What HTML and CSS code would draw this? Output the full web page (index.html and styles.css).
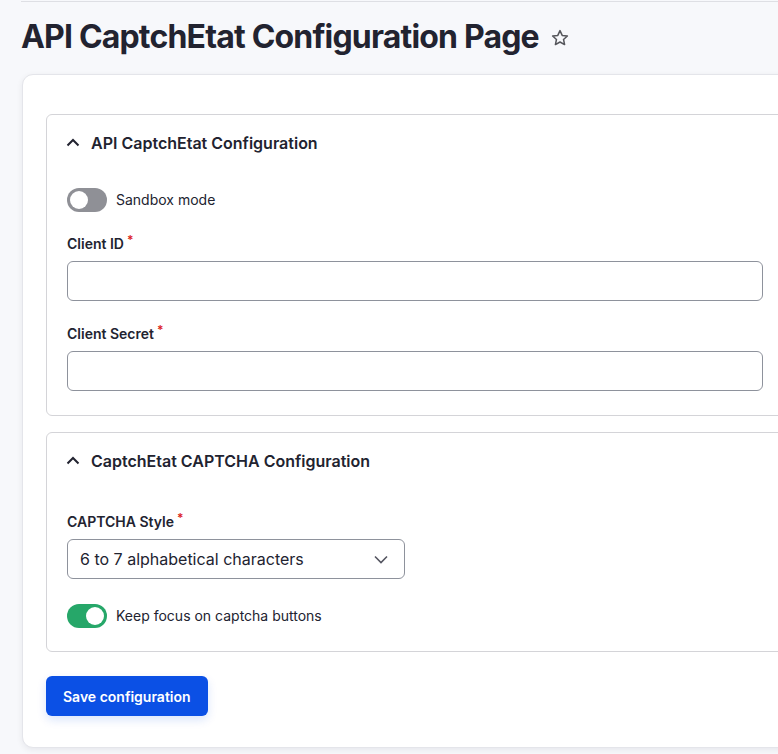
FILE: index.html
```html
<!DOCTYPE html>
<html lang="en">
<head>
<meta charset="utf-8">
<title>API CaptchEtat Configuration Page</title>
<link rel="stylesheet" href="styles.css">
</head>
<body>
<div class="topline"></div>
<div class="page-title">
  <h1>API CaptchEtat Configuration Page</h1>
  <svg class="star" width="18" height="18" viewBox="0 0 20 20" aria-hidden="true"><path d="M10 1.8l2.45 5.3 5.75.62-4.3 3.9 1.2 5.68L10 14.4l-5.1 2.9 1.2-5.68-4.3-3.9 5.75-.62z" fill="none" stroke="#55565b" stroke-width="1.7" stroke-linejoin="round"/></svg>
</div>
<main class="card">
  <section class="details">
    <div class="summary">
      <svg class="chev" width="14" height="10" viewBox="0 0 14 10" aria-hidden="true"><path d="M1.5 7.5L7 2l5.5 5.5" fill="none" stroke="#222330" stroke-width="2"/></svg>
      <span>API CaptchEtat Configuration</span>
    </div>
    <div class="details-body first-body">
      <div class="toggle-row first">
        <span class="toggle"><span class="knob"></span></span>
        <span class="toggle-label">Sandbox mode</span>
      </div>
      <div class="field">
        <label class="label">Client ID<span class="req">*</span></label>
        <div class="input"></div>
      </div>
      <div class="field">
        <label class="label">Client Secret<span class="req">*</span></label>
        <div class="input"></div>
      </div>
    </div>
  </section>
  <section class="details second">
    <div class="summary">
      <svg class="chev" width="14" height="10" viewBox="0 0 14 10" aria-hidden="true"><path d="M1.5 7.5L7 2l5.5 5.5" fill="none" stroke="#222330" stroke-width="2"/></svg>
      <span>CaptchEtat CAPTCHA Configuration</span>
    </div>
    <div class="details-body">
      <div class="field field-top">
        <label class="label">CAPTCHA Style<span class="req">*</span></label>
        <div class="select">
          <span>6 to 7 alphabetical characters</span>
          <svg width="14" height="9" viewBox="0 0 14 9" aria-hidden="true"><path d="M1 1.5l6 6 6-6" fill="none" stroke="#545560" stroke-width="1.6"/></svg>
        </div>
      </div>
      <div class="toggle-row on-row">
        <span class="toggle on"><span class="knob"></span></span>
        <span class="toggle-label">Keep focus on captcha buttons</span>
      </div>
    </div>
  </section>
  <div class="actions">
    <button class="btn">Save configuration</button>
  </div>
</main>
</body>
</html>
```

FILE: styles.css
```css
html, body {
  margin: 0;
  padding: 0;
  overflow: hidden;
}
body {
  background: #f7f8fb;
  font-family: Inter, "Noto Sans", "Liberation Sans", sans-serif;
  color: #222330;
  width: 778px;
  height: 754px;
}
.topline {
  margin-left: 21px;
  height: 1px;
  border-bottom: 1px solid #dedfe4;
}
.page-title {
  display: flex;
  align-items: center;
  gap: 12px;
  padding-left: 21px;
  height: 70px;
}
.page-title h1 {
  margin: 0;
  font-size: 32px;
  font-weight: 700;
  letter-spacing: -0.82px;
  line-height: 40px;
  color: #222330;
}
.star {
  margin-top: 1px;
}
.card {
  margin-left: 22px;
  margin-top: 2px;
  width: 738px;
  box-sizing: content-box;
  padding: 39px 23px 31px;
  background: #fff;
  border: 1px solid #e4e5ea;
  border-radius: 11px;
  box-shadow: 0 2px 6px rgba(0, 0, 40, 0.07);
}
.details {
  border: 1px solid #d4d4d8;
  border-radius: 6px;
  background: #fff;
}
.details.second {
  margin-top: 16px;
}
.summary {
  display: flex;
  align-items: center;
  height: 24px;
  padding: 16px 19px 16px;
  font-size: 16px;
  font-weight: 600;
  line-height: 24px;
}
.chev {
  margin-right: 11px;
  margin-top: -1px;
}
.details-body {
  padding: 0 20px 23px;
}
.details-body.first-body {
  padding-bottom: 24px;
}
.toggle-row {
  display: flex;
  align-items: center;
  gap: 9px;
  height: 24px;
}
.toggle-row.first {
  margin-top: 17px;
}
.toggle-row.on-row {
  margin-top: 25px;
}
.toggle {
  position: relative;
  width: 40px;
  height: 24px;
  border-radius: 12px;
  background: #8f9096;
  flex: none;
}
.toggle .knob {
  position: absolute;
  top: 3px;
  left: 3px;
  width: 18px;
  height: 18px;
  border-radius: 50%;
  background: #fff;
}
.toggle.on {
  background: #26a769;
}
.toggle.on .knob {
  left: 19px;
}
.toggle-label {
  font-size: 14px;
  line-height: 18px;
  color: #222330;
}
.field {
  margin-top: 23px;
}
.field + .field {
  margin-top: 24px;
}
.field.field-top {
  margin-top: 24px;
}
.label {
  display: block;
  font-size: 14px;
  font-weight: 600;
  line-height: 18px;
  margin-bottom: 8px;
}
.req {
  color: #dc2323;
  font-size: 12px;
  vertical-align: top;
  position: relative;
  top: -4px;
  margin-left: 3px;
}
.input {
  height: 38px;
  border: 1px solid #8e929c;
  border-radius: 6px;
  background: #fff;
}
.select {
  height: 38px;
  border: 1px solid #8e929c;
  border-radius: 6px;
  display: flex;
  align-items: center;
  justify-content: space-between;
  padding: 0 16px 0 12px;
  box-sizing: content-box;
  width: 308px;
  font-size: 16px;
}
.actions {
  margin-top: 24px;
}
.btn {
  font-family: Inter, "Noto Sans", "Liberation Sans", sans-serif;
  font-size: 14px;
  font-weight: 600;
  color: #fff;
  background: #0b50e5;
  border: 0;
  border-radius: 6px;
  height: 40px;
  padding: 0 17px;
  box-shadow: 0 4px 10px rgba(11, 80, 229, 0.15);
}
```
